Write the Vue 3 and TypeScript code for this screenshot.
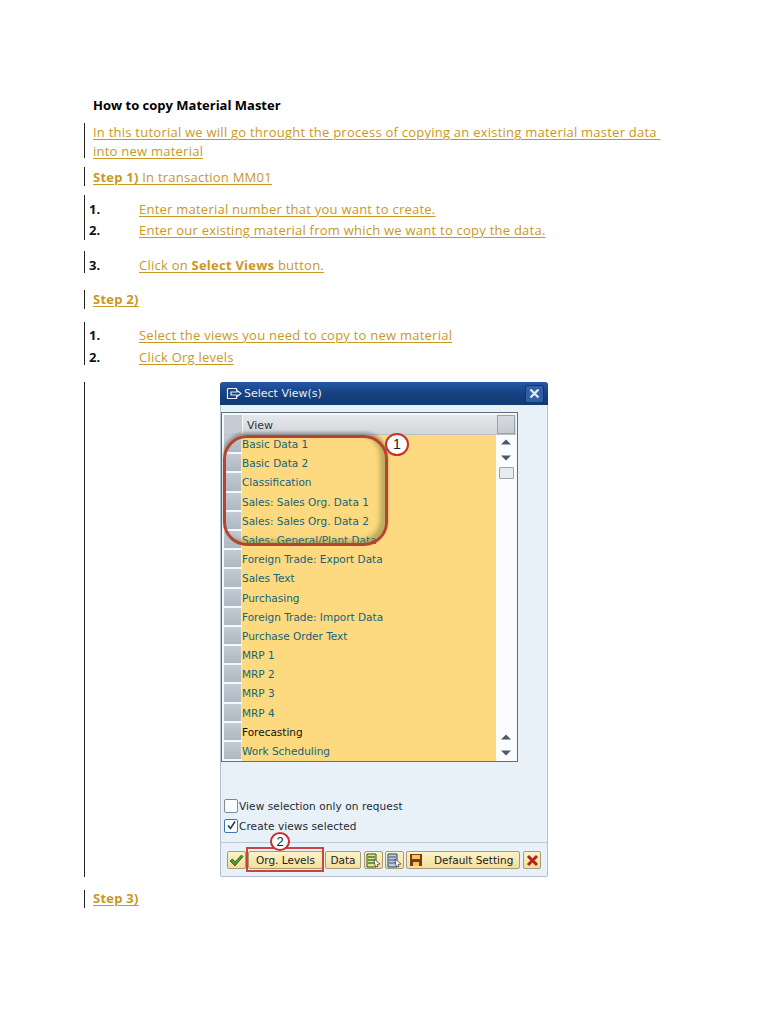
<script setup lang="ts">
interface ViewRow { label: string; dark?: boolean }
const rows: ViewRow[] = [
  { label: 'Basic Data 1' }, { label: 'Basic Data 2' }, { label: 'Classification' },
  { label: 'Sales: Sales Org. Data 1' }, { label: 'Sales: Sales Org. Data 2' },
  { label: 'Sales: General/Plant Data' }, { label: 'Foreign Trade: Export Data' },
  { label: 'Sales Text' }, { label: 'Purchasing' }, { label: 'Foreign Trade: Import Data' },
  { label: 'Purchase Order Text' }, { label: 'MRP 1' }, { label: 'MRP 2' }, { label: 'MRP 3' },
  { label: 'MRP 4' }, { label: 'Forecasting', dark: true }, { label: 'Work Scheduling' }
]
</script>

<template>
  <div class="page">
    <h1 class="heading">How to copy Material Master</h1>

    <div class="block intro">
      <p class="link">In this tutorial we will go throught the process of copying an existing material master data&nbsp;</p>
      <p class="link">into new material</p>
    </div>

    <div class="block step s1"><span class="link"><b>Step 1)</b> In transaction MM01</span></div>

    <div class="block list l1">
      <div class="item"><b class="num">1.</b><span class="link">Enter material number that you want to create.</span></div>
      <div class="item"><b class="num">2.</b><span class="link">Enter our existing material from which we want to copy the data.</span></div>
    </div>

    <div class="block list l3">
      <div class="item"><b class="num">3.</b><span class="link">Click on <b>Select Views</b> button.</span></div>
    </div>

    <div class="block step s2"><span class="link"><b>Step 2)</b></span></div>

    <div class="block list l4">
      <div class="item"><b class="num">1.</b><span class="link">Select the views you need to copy to new material</span></div>
      <div class="item"><b class="num">2.</b><span class="link">Click Org levels</span></div>
    </div>

    <div class="block figure">
      <div class="dialog">
        <div class="titlebar">
          <svg class="title-icon" width="16" height="13" viewBox="0 0 16 13" fill="none" stroke="#e8eefa" stroke-width="1.2">
            <path d="M1.500 1.500h9v2M1.500 1.500v10h9V9" />
            <path d="M5 5h6V3.500L15 6.500 11 9.500V8H5z" />
          </svg>
          <span class="title">Select View(s)</span>
          <span class="close">
            <svg width="11" height="11" viewBox="0 0 11 11" stroke="#dce8f8" stroke-width="2.400"><path d="M1.500 1.500l8 8M9.500 1.500l-8 8" /></svg>
          </span>
        </div>

        <div class="table">
          <div class="thead">
            <span class="corner"></span>
            <span class="th">View</span>
            <span class="settings"></span>
          </div>
          <div class="tbody">
            <div class="selectors">
              <span v-for="r in rows" :key="r.label" class="sel"></span>
            </div>
            <div class="cells">
              <div v-for="r in rows" :key="r.label" class="cell" :class="{ dark: r.dark }">{{ r.label }}</div>
            </div>
            <div class="scroll">
              <div class="scroll-top">
                <svg width="10" height="6" viewBox="0 0 10 6"><path d="M5 .5L10 5.500H0z" fill="#4a5a6a" /></svg>
                <svg class="down" width="10" height="6" viewBox="0 0 10 6"><path d="M0 .5h10L5 5.500z" fill="#4a5a6a" /></svg>
                <span class="thumb"></span>
              </div>
              <div class="scroll-bottom">
                <svg width="10" height="6" viewBox="0 0 10 6"><path d="M5 .5L10 5.500H0z" fill="#4a5a6a" /></svg>
                <svg class="down" width="10" height="6" viewBox="0 0 10 6"><path d="M0 .5h10L5 5.500z" fill="#4a5a6a" /></svg>
              </div>
            </div>
          </div>
        </div>

        <div class="options">
          <label class="opt"><span class="box"></span>View selection only on request</label>
          <label class="opt"><span class="box on">
            <svg width="11" height="11" viewBox="0 0 11 11" fill="none" stroke="#1f3f66" stroke-width="1.600"><path d="M2 5.500l2.500 3L9 1.500" /></svg>
          </span>Create views selected</label>
        </div>

        <div class="toolbar">
          <span class="btn icon">
            <svg width="15" height="13" viewBox="0 0 15 13"><path d="M1 7l2.500-2 2.500 3L12.500 1 14 2.500 6 12z" fill="#4f9a2c" stroke="#1f5a12" stroke-width=".8" /></svg>
          </span>
          <span class="btn org">Org. Levels</span>
          <span class="btn data">Data</span>
          <span class="btn icon doc">
            <svg width="15" height="15" viewBox="0 0 15 15"><path d="M1 1h9v13H1z" fill="#dfe58a" stroke="#33502a" /><path d="M2 4h7M2 7h7M2 10h7" stroke="#4b7a2f" stroke-width="1.500" /><path d="M8 6l6 5-3 .5 1 2.500-3-1z" fill="#fff" stroke="#333" stroke-width=".7" /></svg>
          </span>
          <span class="btn icon doc">
            <svg width="15" height="15" viewBox="0 0 15 15"><path d="M1 1h9v13H1z" fill="#b9cbe0" stroke="#33465c" /><path d="M2 4h7M2 7h7M2 10h7" stroke="#5f7c9c" stroke-width="1.500" /><path d="M8 6l6 5-3 .5 1 2.500-3-1z" fill="#fff" stroke="#333" stroke-width=".7" /></svg>
          </span>
          <span class="btn setting">
            <svg width="14" height="14" viewBox="0 0 14 14"><path d="M1 1h12v12H1z" fill="#7a3b1e" /><path d="M3 2h8v4H3z" fill="#f3c75c" /><path d="M4 9h6v4H4z" fill="#f3c75c" /></svg>
            <span>Default Setting</span>
          </span>
          <span class="btn icon cancel">
            <svg width="13" height="13" viewBox="0 0 13 13" stroke="#b5241c" stroke-width="3"><path d="M2 2l9 9M11 2l-9 9" /></svg>
          </span>
        </div>

        <!-- annotation overlays -->
        <div class="ring"></div>
        <span class="badge b1">1</span>
        <div class="org-frame"></div>
        <span class="badge b2">2</span>
      </div>
    </div>

    <div class="block step s3"><span class="link"><b>Step 3)</b></span></div>
  </div>
</template>

<style>
html, body { margin: 0; background: #fff; }
</style>

<style scoped>
.page {
  width: 768px;
  height: 1024px;
  box-sizing: border-box;
  padding: 97px 0 0 84px;
  font-family: "Open Sans", "Liberation Sans", sans-serif;
  font-size: 13px;
  letter-spacing: .24px;
  color: #111;
  overflow: hidden;
  background: #fff;
}
p { margin: 0; }
.heading {
  margin: 0 0 11px 9px;
  font-size: 13px;
  letter-spacing: 0;
  line-height: 16px;
  font-weight: 700;
  color: #000;
}
.block { border-left: 1px solid #222; }
.link {
  color: #c8981f;
  text-decoration: underline;
  text-underline-offset: 2px;
  text-decoration-thickness: 1px;
}
.link b { font-weight: 700; }
.intro { height: 35px; padding-left: 8px; line-height: 19px; margin-bottom: 9px; }
.intro p:first-child { margin-top: -1px; }
.step { height: 19px; padding-left: 8px; line-height: 18px; }
.s1 { margin-bottom: 9px; line-height: 20px; }
.list { display: flex; flex-direction: column; box-sizing: border-box; }
.item { display: flex; height: 21px; align-items: center; flex: none; }
.num { width: 50px; padding-left: 4px; color: #111; flex: none; letter-spacing: 0; }
.l1 { padding-top: 3px; height: 45px; margin-bottom: 11px; }
.l3 { height: 22px; padding-top: 3px; margin-bottom: 17px; }
.s2 { margin-bottom: 13px; }
.l4 { height: 43px; padding-top: 2px; gap: 1px; margin-bottom: 17px; }
.figure { height: 495px; padding-left: 135px; margin-bottom: 13px; }
.s3 { height: 18px; line-height: 17px; }

.dialog {
  position: relative;
  width: 328px;
  height: 495px;
  box-sizing: border-box;
  background: #e8f0f8;
  border: 1px solid #b4c0cc;
  border-radius: 3px 3px 2px 2px;
  display: flex;
  flex-direction: column;
  font-family: "DejaVu Sans", "Liberation Sans", sans-serif;
  font-size: 10.500px;
  letter-spacing: 0;
  color: #1d2a36;
}
.titlebar {
  height: 23px;
  flex: none;
  margin: -1px -1px 0;
  display: flex;
  align-items: center;
  padding: 0 4px 0 6px;
  background: linear-gradient(#2458a8, #17417f 50%, #0f3a72);
  border-radius: 3px 3px 0 0;
  color: #e8eefa;
}
.title-icon { flex: none; margin-right: 2px; }
.title { flex: 1; font-size: 11px; }
.close {
  width: 17px; height: 16px;
  display: flex; align-items: center; justify-content: center;
  background: #2f5fa8; border: 1px solid #13376c; border-radius: 2px;
}
.table {
  margin: 7px 0 0 0;
  width: 297px;
  height: 350px;
  box-sizing: border-box;
  border: 1px solid #5f6f7c;
  background: #f4f8fb;
  padding: 2px 1px 0 2px;
  flex: none;
}
.thead { display: flex; height: 19px; background: linear-gradient(#e5e8eb, #d2d6da); border-bottom: 1px solid #b9c0c6; }
.corner { width: 18px; background: #c6ccd3; border-right: 1px solid #f4f6f8; flex: none; }
.th { flex: 1; padding-left: 4px; line-height: 21px; color: #333; font-size: 11px; }
.settings { width: 16px; margin: 0 1px; background: linear-gradient(#d8dbde, #c6cacf); border: 1px solid #9aa2a9; flex: none; }
.tbody { display: flex; height: 326px; overflow: hidden; }
.selectors { width: 18px; display: flex; flex-direction: column; flex: none; }
.sel { height: 17.200px; flex: none; background: linear-gradient(#c2cad2, #aeb8c3); margin-bottom: 2px; border-right: 1px solid #e4e8ec; }
.cells { width: 254px; background: #fdd97f; flex: none; overflow: hidden; box-sizing: border-box; }
.cell { height: 19.200px; line-height: 18px; color: #14647c; white-space: nowrap; }
.cell.dark { color: #111; }
.scroll { flex: 1; display: flex; flex-direction: column; justify-content: space-between; align-items: center; background: #fbfcfe; }
.scroll-top, .scroll-bottom { display: flex; flex-direction: column; align-items: center; }
.scroll-top { padding-top: 4px; }
.scroll-bottom { padding-bottom: 5px; }
.down { margin-top: 10px; }
.thumb { width: 13px; height: 10px; margin-top: 6px; border: 1px solid #9aa5b0; border-radius: 1px; background: #e8ecf1; }
.options { margin-top: 37px; padding-left: 3px; display: flex; flex-direction: column; gap: 7px; flex: none; }
.opt { display: flex; align-items: center; height: 13px; font-size: 10.500px; letter-spacing: .1px; gap: 1px; }
.box { width: 12px; height: 12px; border: 1px solid #7d8a96; border-radius: 2px; background: #fbfcfd; display: flex; align-items: center; justify-content: center; flex: none; }
.box.on { border-color: #3f76b0; }
.toolbar {
  margin-top: 10px;
  flex: 1;
  border-top: 1px solid #bcc8d3;
  display: flex;
  align-items: flex-start;
  padding: 8px 0 0 6px;
  gap: 2px;
}
.btn {
  height: 18px;
  box-sizing: border-box;
  display: inline-flex;
  align-items: center;
  justify-content: center;
  background: linear-gradient(#fdf3c8, #f5dd9a);
  border: 1px solid #a99c74;
  border-radius: 2px;
  color: #222;
  font-size: 10.500px;
  white-space: nowrap;
  flex: none;
}
.icon { width: 19px; }
.org { width: 75px; }
.data { width: 36px; margin-right: 1px; }
.setting { width: 114px; justify-content: flex-start; padding-left: 2px; }
.setting span { padding-left: 11px; }
.cancel { width: 18px; margin-left: 1px; }

.ring {
  position: absolute;
  left: 2px; top: 52px;
  width: 165px; height: 111px;
  box-sizing: border-box;
  border-radius: 24px;
  border: 3px solid #b5452f;
  box-shadow: inset -5px -3px 4px rgba(120, 130, 60, .5), 0 -3px 3px rgba(90, 90, 90, .45);
  pointer-events: none;
}
.badge {
  position: absolute;
  box-sizing: border-box;
  border-radius: 50%;
  background: #fff;
  border: 2px solid #c8302a;
  text-align: center;
  font-family: "Liberation Sans", sans-serif;
  color: #222;
}
.b1 { left: 164px; top: 50px; width: 24px; height: 23px; line-height: 19px; font-size: 14px; }
.b2 { left: 49px; top: 449px; width: 20px; height: 19px; line-height: 15px; font-size: 13px; }
.org-frame {
  position: absolute;
  left: 25px; top: 464px;
  width: 78px; height: 25px;
  box-sizing: border-box;
  border: 2px solid #c8443c;
  pointer-events: none;
}
</style>
